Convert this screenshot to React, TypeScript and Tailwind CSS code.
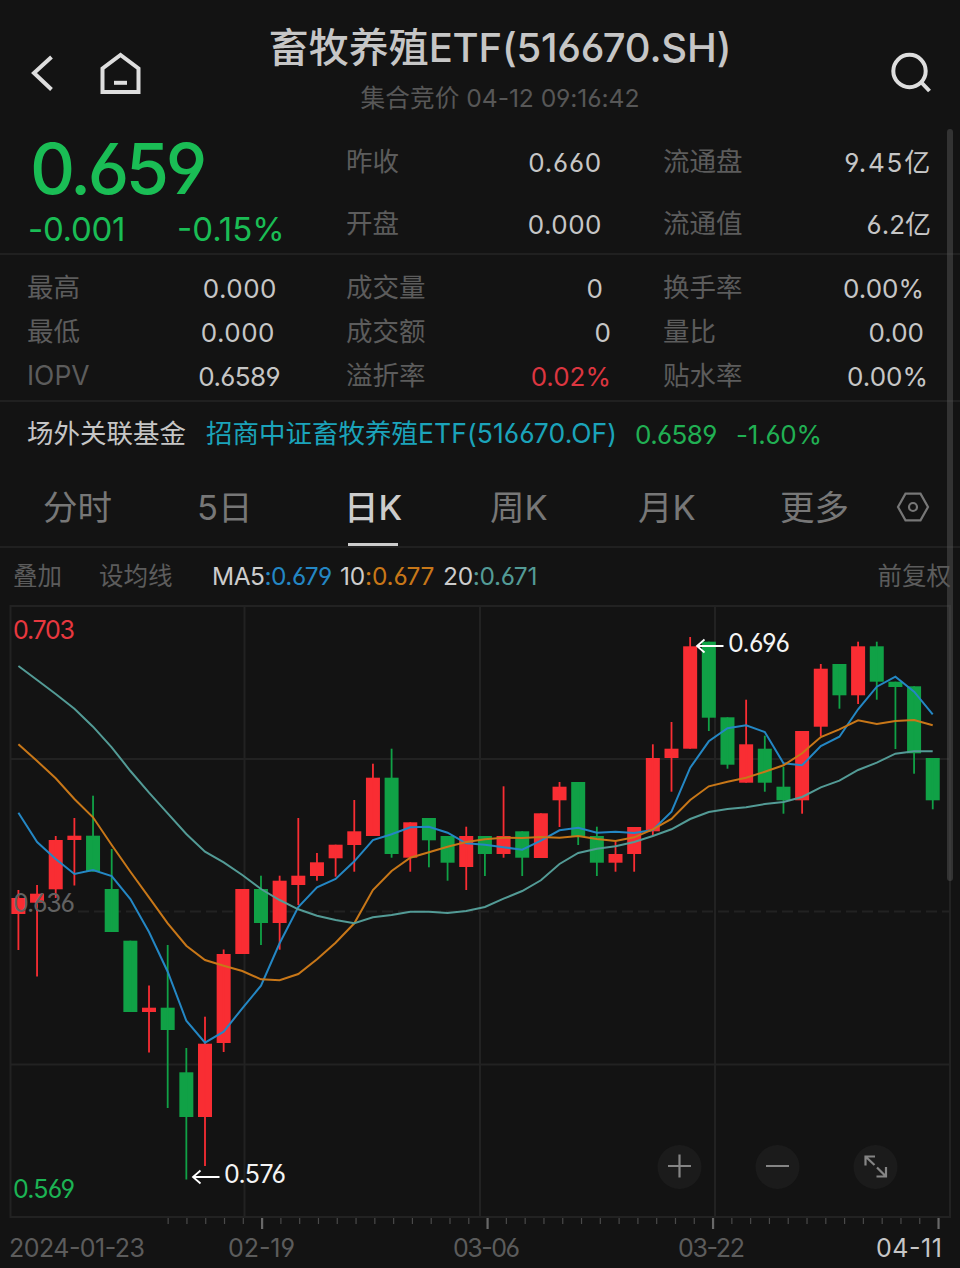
import type { FC } from 'react';

type Candle = [top: number, bottom: number, high: number, low: number, up: 0 | 1];

interface Stat {
    label: string;
    value: string;
    className: string;
}

const TOP_STATS: Stat[] = [
    { label: '昨收', value: '0.660', className: 'mr-[61px] tracking-[0.8px] text-[#c6c6c6]' },
    { label: '流通盘', value: '9.45亿', className: 'mr-[28px] tracking-[1.8px] text-[#c6c6c6]' },
    { label: '开盘', value: '0.000', className: 'mr-[61px] tracking-[0.5px] text-[#c6c6c6]' },
    { label: '流通值', value: '6.2亿', className: 'mr-[29px] text-[#c6c6c6]' },
];

const STATS: Stat[] = [
    { label: '最高', value: '0.000', className: 'mr-[69px] tracking-[0.5px] text-[#c6c6c6]' },
    { label: '成交量', value: '0', className: 'mr-[60px] text-[#c6c6c6]' },
    { label: '换手率', value: '0.00%', className: 'mr-[36px] text-[#c6c6c6]' },
    { label: '最低', value: '0.000', className: 'mr-[71px] tracking-[0.5px] text-[#c6c6c6]' },
    { label: '成交额', value: '0', className: 'mr-[52px] text-[#c6c6c6]' },
    { label: '量比', value: '0.00', className: 'mr-[36px] text-[#c6c6c6]' },
    { label: 'IOPV', value: '0.6589', className: 'mr-[66px] tracking-[-0.6px] text-[#c6c6c6]' },
    { label: '溢折率', value: '0.02%', className: 'mr-[52px] text-[#dc3640]' },
    { label: '贴水率', value: '0.00%', className: 'mr-[32px] text-[#c6c6c6]' },
];

const TABS = [
    { label: '分时', className: 'w-[155px] pl-[43px]' },
    { label: '5日', className: 'w-[147px] pl-[42px]' },
    { label: '日K', className: 'w-[142px] pl-[42px]', active: true },
    { label: '周K', className: 'w-[148px] pl-[46px]' },
    { label: '月K', className: 'w-[148px] pl-[46px]' },
    { label: '更多', className: 'w-[140px] pl-[40px]' },
];

const CANDLES: Candle[] = [
    [898, 914, 890, 950, 1],
    [893.7, 902.7, 885, 976.5, 1],
    [840, 889.3, 836, 898, 1],
    [835.7, 840, 818, 885.5, 1],
    [835.7, 871.5, 795.7, 871.5, 0],
    [889, 932, 849, 932, 0],
    [940.7, 1012, 940.7, 1012, 0],
    [1007.7, 1012, 985.5, 1052.5, 1],
    [1007.7, 1030, 945, 1108, 0],
    [1072.3, 1117, 1048, 1179.5, 0],
    [1043.7, 1117, 1016.7, 1166, 1],
    [954, 1043, 949.5, 1052, 1],
    [889, 954, 889, 954, 1],
    [889, 923, 875.7, 945, 0],
    [880.7, 923, 875.7, 949.7, 1],
    [875.7, 885, 818, 905, 1],
    [862.3, 876, 853, 880.7, 1],
    [844.7, 858.3, 844.7, 876.7, 1],
    [831.3, 845, 800, 871.7, 1],
    [777.7, 836, 763.7, 836, 1],
    [777.7, 854, 748.7, 857.7, 0],
    [822.3, 857.7, 822.3, 871.7, 1],
    [818, 840.3, 818, 867.3, 0],
    [836, 862.7, 836, 880.7, 0],
    [836, 867, 826.7, 890, 1],
    [836, 854, 836, 876, 0],
    [836, 854, 786.3, 857.7, 1],
    [831.3, 857.7, 831.3, 876, 0],
    [813.3, 858, 813.3, 858, 1],
    [786.7, 800.3, 782, 827, 1],
    [782, 836, 782, 845, 0],
    [836, 862.7, 826.7, 876, 0],
    [854, 862.7, 841.7, 871.7, 1],
    [827, 854, 827, 871.7, 1],
    [758, 831.3, 744.3, 836, 1],
    [748.7, 758, 722, 791.7, 1],
    [646.3, 748.7, 637, 748.7, 1],
    [641.7, 717.7, 641.7, 731, 0],
    [717.3, 764.7, 717.3, 768.7, 0],
    [744.3, 782.7, 699.7, 782.7, 1],
    [748.7, 782.7, 735.7, 791.7, 0],
    [786.7, 800.3, 766.7, 813.7, 0],
    [731, 800.3, 731, 813.7, 1],
    [668.7, 726.7, 664, 736, 1],
    [664, 695.3, 664, 708.7, 0],
    [646.3, 695.3, 641.7, 704, 1],
    [646.3, 681.7, 641.7, 699.7, 0],
    [681.7, 687, 681.7, 749, 0],
    [686.3, 753.3, 686.3, 773.7, 0],
    [758, 800.3, 758, 809.3, 0],
];

const MA_LINES = [
    {
        id: 'ma5',
        color: '#2487c4',
        values: [
            812.7, 842, 859, 874, 870, 876, 899, 932, 971.7, 1020.7, 1042.7, 1031.7, 1008.3, 985.7, 943.3, 907, 887.3,
            879, 861.3, 840, 834.3, 827.3, 826.7, 832.7, 843.3, 844.7, 847.3, 849.7, 840.7, 830.3, 827.7, 832.7, 831.7,
            833, 830, 811.7, 767.7, 741.3, 728.3, 725.3, 732, 763.3, 765.3, 746, 736.7, 709.3, 686.7, 676.7, 691.7,
            714.3,
        ],
    },
    {
        id: 'ma10',
        color: '#c87718',
        values: [
            744.3, 761, 778.3, 799, 817.3, 845, 871.7, 897.3, 923.3, 945.7, 960, 965.7, 971, 979.3, 980.3, 974, 959.3,
            942.7, 923.3, 890, 871, 857.7, 852.3, 846.7, 842, 839.3, 837.7, 838, 837, 837.7, 836, 839, 841, 837.3,
            829.3, 819, 800, 786.3, 781.7, 777.7, 771.7, 765.3, 753.3, 737, 729.3, 720.3, 724, 721, 720, 725.3,
        ],
    },
    {
        id: 'ma20',
        color: '#539b96',
        values: [
            666, 680, 694, 708.7, 726.7, 747.3, 771, 792.7, 813.3, 834, 851.7, 862.3, 875, 889, 900, 909.3, 915.7, 920,
            923.3, 917.3, 915, 911.7, 911.7, 913, 911, 907, 898.7, 891, 880.3, 864, 853, 848.7, 846.3, 842, 836, 829.3,
            819, 812, 809, 807.3, 804, 802, 797, 787.3, 780.7, 770, 762.7, 753.7, 751.3, 751.3,
        ],
    },
];

const TICKS = Array.from({ length: 42 }, (_, i) => i - 5);

const candleX = (index: number) => 18.4 + index * 18.66;

const toPoints = (values: number[]) => values.map((y, i) => `${candleX(i).toFixed(1)},${y}`).join(' ');

const StatCell: FC<{ stat: Stat }> = ({ stat }) => (
    <div className="flex items-center justify-between">
        <span className="text-[26.5px] text-[#5c5c5c]">{stat.label}</span>
        <span className={`text-[26px] ${stat.className}`}>{stat.value}</span>
    </div>
);

const Header = () => (
    <header className="flex h-[125px] items-start justify-between">
        <div className="flex w-[200px] pt-[50px] pl-[29px]">
            <svg width="26" height="46" viewBox="0 0 26 46" fill="none" stroke="#dedede" strokeWidth="4">
                <path d="M22.5 7 5 23l17.5 16.5" />
            </svg>
            <svg className="ml-[43px]" width="46" height="46" viewBox="0 0 46 46" fill="none" stroke="#dedede" strokeWidth="4">
                <path d="M4.5 42V18.5L22.5 5l18 13.5V42Z" />
                <path d="M16 32.8h13" />
            </svg>
        </div>
        <div className="ml-[40px] flex flex-col items-center whitespace-nowrap">
            <h1 className="mt-[20px] h-[56px] text-[40px] leading-[56px] font-medium text-[#c6c6c6]">
                畜牧养殖<span className="tracking-[-0.2px]">ETF(516670.SH)</span>
            </h1>
            <p className="mt-[4px] text-[24.7px] leading-[36px] text-[#575757]">
                集合竞价 <span className="tracking-[-0.1px]">04-12 09:16:42</span>
            </p>
        </div>
        <div className="flex w-[200px] justify-end pt-[50px] pr-[26px]">
            <svg width="46" height="46" viewBox="0 0 46 46" fill="none" stroke="#dedede" strokeWidth="4">
                <circle cx="21.5" cy="21" r="16.2" />
                <path d="m33 32 8.5 9" />
            </svg>
        </div>
    </header>
);

const QuotePanel = () => (
    <>
        <section className="flex h-[130px] border-b-2 border-[#202020]">
            <div className="w-[346px] pl-[28px] text-[#1abd55]">
                <div className="flex h-[86px] items-center pl-[2px] text-[70px] font-medium tracking-[-3.4px]">0.659</div>
                <div className="flex h-[38px] items-center text-[33px]">
                    <span className="w-[149px] tracking-[-0.3px]">-0.001</span>
                    <span>-0.15%</span>
                </div>
            </div>
            <div className="grid flex-1 auto-rows-[62px] grid-cols-[317px_297px] pt-[6px]">
                {TOP_STATS.map((stat) => (
                    <StatCell key={stat.label} stat={stat} />
                ))}
            </div>
        </section>
        <section className="grid h-[147px] auto-rows-[44px] grid-cols-[319px_317px_297px] border-b-2 border-[#202020] pt-[11px] pl-[27px]">
            {STATS.map((stat) => (
                <StatCell key={stat.label} stat={stat} />
            ))}
        </section>
        <section className="flex h-[64px] items-center pl-[27px] text-[26.5px] whitespace-nowrap">
            <span className="w-[179px] text-[#c6c6c6]">场外关联基金</span>
            <span className="w-[429px] text-[#1ba3ba]">
                招商中证畜牧养殖<span className="tracking-[0.1px]">ETF(516670.OF)</span>
            </span>
            <span className="w-[101px] text-[26px] tracking-[-0.6px] text-[#21b053]">0.6589</span>
            <span className="text-[26px] tracking-[-0.2px] text-[#21b053]">-1.60%</span>
        </section>
    </>
);

const PeriodTabs = () => (
    <nav className="flex h-[82px] border-b-2 border-[#202020] text-[34.5px] whitespace-nowrap text-[#777777]">
        {TABS.map((tab) => (
            <div key={tab.label} className={`flex flex-col justify-between ${tab.className}`}>
                <span className={tab.active ? 'mt-[16px] font-medium text-[#cccccc]' : 'mt-[16px]'}>{tab.label}</span>
                {tab.active && <span className="ml-[4px] h-[3px] w-[50px] bg-[#cccccc]" />}
            </div>
        ))}
        <svg className="mt-[24px] ml-[16px]" width="34" height="34" viewBox="0 0 34 34" fill="none" stroke="#777777" strokeWidth="2.2">
            <path d="M9.5 3.7h15L32 17l-7.5 13.3h-15L2 17Z" />
            <circle cx="17" cy="17" r="4" />
        </svg>
    </nav>
);

const MaLegend = () => (
    <div className="flex h-[57px] items-center whitespace-nowrap text-[24.5px] text-[#5c5c5c]">
        <span className="w-[86px] pl-[13px]">叠加</span>
        <span className="w-[126px] pl-[13px]">设均线</span>
        <span className="w-[128px] tracking-[-0.5px] text-[#cccccc]">
            MA5<span className="text-[#2487c4]">:0.679</span>
        </span>
        <span className="w-[103px] tracking-[-0.2px] text-[#cccccc]">
            10<span className="text-[#c87718]">:0.677</span>
        </span>
        <span className="flex-1 tracking-[-0.3px] text-[#cccccc]">
            20<span className="text-[#539b96]">:0.671</span>
        </span>
        <span className="pr-[9px]">前复权</span>
    </div>
);

const KLineChart = () => (
    <svg className="block" width="960" height="663" viewBox="0 605 960 663" fontSize="25">
        <g stroke="#222222" strokeWidth="2" fill="none">
            <rect x="10.5" y="606" width="939.5" height="611" />
            <path d="M10 759H950M10 1064.5H950M244.5 606V1217M480 606V1217M715 606V1217" />
            <path d="M78 911.5H950" strokeDasharray="11 5" />
        </g>
        {CANDLES.map(([top, bottom, high, low, up], i) => (
            <g key={i} fill={up ? '#f92d33' : '#10a146'}>
                <rect x={candleX(i) - 7} y={top} width="14" height={bottom - top} />
                <rect x={candleX(i) - 0.9} y={high} width="1.8" height={low - high} />
            </g>
        ))}
        {MA_LINES.map((line) => (
            <polyline key={line.id} points={toPoints(line.values)} fill="none" stroke={line.color} strokeWidth="2" />
        ))}
        <text x="13" y="639" textLength="62" fill="#e8383f">0.703</text>
        <text x="13" y="911.5" textLength="62" fill="#626262">0.636</text>
        <text x="13" y="1197.5" textLength="62" fill="#1cb454">0.569</text>
        <g stroke="#ffffff" strokeWidth="1.8" fill="none">
            <path d="M723.5 646H697M704.5 639.5 697 646l7.5 6.5" />
            <path d="M219.5 1177H193M200.5 1170.5 193 1177l7.5 6.5" />
        </g>
        <text x="728" y="652" textLength="62" fill="#f4f4f4">0.696</text>
        <text x="224" y="1183" textLength="62" fill="#f4f4f4">0.576</text>
        <g fill="#1b1b1b">
            <circle cx="679.5" cy="1167" r="22" />
            <circle cx="777.5" cy="1167" r="22" />
            <circle cx="875.5" cy="1167" r="22" />
        </g>
        <g stroke="#858585" strokeWidth="2.2" fill="none">
            <path d="M668 1166h23M679.5 1154.5v23M766 1166h23" />
            <path d="M874.5 1165 865.5 1156.5M865.5 1165.5v-9h9.5M877 1167.5l9 9M886 1167v9.5h-9.5" />
        </g>
        {TICKS.map((tick) => {
            const major = tick % 12 === 0;
            return (
                <rect
                    key={tick}
                    x={261.5 + tick * 18.79 - (major ? 0.5 : 0)}
                    y="1218"
                    width={major ? 2.2 : 1.2}
                    height={major ? 11 : 6}
                    fill={major ? '#686868' : '#4a4a4a'}
                />
            );
        })}
        <g fill="#5c5c5c">
            <text x="9" y="1256.5" textLength="136">2024-01-23</text>
            <text x="228" y="1256.5" textLength="67">02-19</text>
            <text x="453" y="1256.5" textLength="67">03-06</text>
            <text x="678" y="1256.5" textLength="67">03-22</text>
            <text x="876" y="1256.5" textLength="66" fill="#c6c6c6">04-11</text>
        </g>
    </svg>
);

const App = () => (
    <main className="relative h-[1268px] w-[960px] overflow-hidden bg-[#131313] font-['Inter','Noto_Sans_CJK_SC',sans-serif] leading-normal [font-feature-settings:'cv03','cv04']">
        <Header />
        <QuotePanel />
        <PeriodTabs />
        <MaLegend />
        <KLineChart />
        <div className="absolute top-[129px] left-[947px] h-[752px] w-[6px] rounded-full bg-[#5a5a5a]/45" />
    </main>
);

export default App;
